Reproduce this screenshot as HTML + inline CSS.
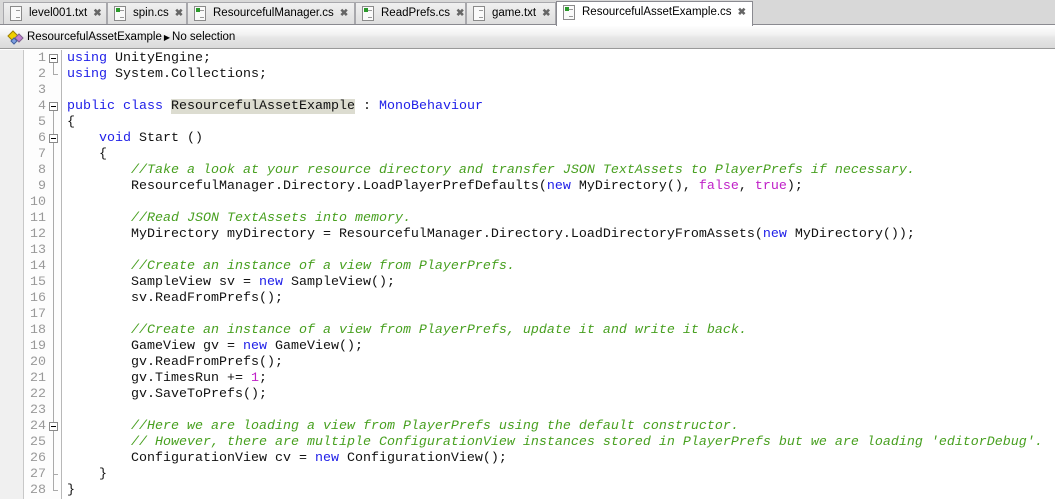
<!DOCTYPE html>
<html><head><meta charset="utf-8"><style>
*{margin:0;padding:0;box-sizing:border-box}
body{width:1055px;height:499px;overflow:hidden;background:#fff;position:relative;font-family:"Liberation Sans",Tahoma,sans-serif}
#tabs{position:absolute;left:0;top:0;width:1055px;height:25px;background:#d8d8d8;border-bottom:1px solid #8a8a90}
.tab{position:absolute;top:2px;height:22px;background:linear-gradient(#f0f0f0,#dedede);border:1px solid #a8a8ac;border-bottom:none;font-size:11.5px;color:#000;line-height:21px;padding-left:25px;white-space:nowrap;overflow:hidden}
.tab .x{margin-left:6px;color:#666;font-size:10px;font-weight:bold}
.tab.act{top:1px;height:25px;background:#fff;border-color:#8a8a90;z-index:2}
.ic{position:absolute;left:6px;top:3px;width:12px;height:15px;border:1px solid #8a8a8a;background:#fafafa}
.ic.cs::before{content:"";position:absolute;left:1px;top:1px;width:4px;height:4px;background:#2a9a2a}
.ic::after{content:"";position:absolute;left:5px;top:3px;width:4px;height:6px;border-top:1px solid #999;border-bottom:1px solid #999}
#crumb{position:absolute;left:0;top:25px;width:1055px;height:24px;background:linear-gradient(#fff 0,#f2f2f2 40%,#e6e6e6 55%,#dadada 100%);border-bottom:1px solid #999;font-size:11.5px;line-height:25px;padding-left:27px}
#lg{position:absolute;left:0;top:50px;width:24px;height:449px;background:#f0f0f0;border-right:1px solid #c8c8c8}
#ln{position:absolute;left:24px;top:50px;width:38px;height:449px;background:#fdfdfd;border-right:1px solid #b8b8b8}
.n{position:absolute;right:15px;width:30px;text-align:right;font:13.33px "Liberation Mono",monospace;color:#999;height:16px;line-height:16px}
.box{position:absolute;left:25px;width:9px;height:9px;border:1px solid #8a8a8a;background:#fff}
.box::after{content:"";position:absolute;left:1px;top:3px;width:5px;height:1px;background:#000}
.vl{position:absolute;left:29px;width:1px;background:#aaa}
.tk{position:absolute;left:29px;width:5px;height:1px;background:#aaa}
#code{position:absolute;left:67px;top:51px;font:13.33px "Liberation Mono","Courier New",monospace;line-height:16px;white-space:pre;color:#111}
.k{color:#2020e8}.c{color:#48a020;font-style:italic}.m{color:#c020c8}
.hl{background:#dcdcd0}
</style></head><body>
<div id="tabs">
<div class="tab" style="left:3px;width:104px"><span class="ic"></span>level001.txt<span class="x">✖</span></div>
<div class="tab" style="left:107px;width:80px"><span class="ic cs"></span>spin.cs<span class="x">✖</span></div>
<div class="tab" style="left:187px;width:168px"><span class="ic cs"></span>ResourcefulManager.cs<span class="x">✖</span></div>
<div class="tab" style="left:355px;width:111px"><span class="ic cs"></span>ReadPrefs.cs<span class="x">✖</span></div>
<div class="tab" style="left:466px;width:90px"><span class="ic"></span>game.txt<span class="x">✖</span></div>
<div class="tab act" style="left:556px;width:197px"><span class="ic cs"></span>ResourcefulAssetExample.cs<span class="x">✖</span></div>
</div>
<div id="crumb"><svg style="position:absolute;left:7px;top:5px" width="18" height="16"><path d="M1 6 L6 1 L11 6 L6 11Z" fill="#f0d000" stroke="#a08000"/><path d="M8 8 L12 4 L16 8 L12 12Z" fill="#c080d0" stroke="#806090"/><path d="M4 11 L7 8 L10 11 L7 14Z" fill="#80a0e0" stroke="#4060a0"/></svg>ResourcefulAssetExample<span style="font-size:8px;margin:0 2px">▶</span>No selection</div>
<div id="lg"></div>
<div id="ln">
<div class="n" style="top:1px">1</div><div class="n" style="top:17px">2</div><div class="n" style="top:33px">3</div><div class="n" style="top:49px">4</div><div class="n" style="top:65px">5</div><div class="n" style="top:81px">6</div><div class="n" style="top:97px">7</div><div class="n" style="top:113px">8</div><div class="n" style="top:129px">9</div><div class="n" style="top:145px">10</div><div class="n" style="top:161px">11</div><div class="n" style="top:177px">12</div><div class="n" style="top:193px">13</div><div class="n" style="top:209px">14</div><div class="n" style="top:225px">15</div><div class="n" style="top:241px">16</div><div class="n" style="top:257px">17</div><div class="n" style="top:273px">18</div><div class="n" style="top:289px">19</div><div class="n" style="top:305px">20</div><div class="n" style="top:321px">21</div><div class="n" style="top:337px">22</div><div class="n" style="top:353px">23</div><div class="n" style="top:369px">24</div><div class="n" style="top:385px">25</div><div class="n" style="top:401px">26</div><div class="n" style="top:417px">27</div><div class="n" style="top:433px">28</div>
<div class="vl" style="top:13px;height:12px"></div><div class="tk" style="top:24px"></div>
<div class="vl" style="top:61px;height:380px"></div>
<div class="tk" style="top:424px"></div><div class="tk" style="top:440px"></div>
<div class="box" style="top:4px"></div><div class="box" style="top:52px"></div><div class="box" style="top:84px"></div><div class="box" style="top:372px"></div>
</div>
<div id="code"><span class="k">using</span> UnityEngine;
<span class="k">using</span> System.Collections;

<span class="k">public</span> <span class="k">class</span> <span class="hl">ResourcefulAssetExample</span> : <span class="k">MonoBehaviour</span>
{
    <span class="k">void</span> Start ()
    {
        <span class="c">//Take a look at your resource directory and transfer JSON TextAssets to PlayerPrefs if necessary.</span>
        ResourcefulManager.Directory.LoadPlayerPrefDefaults(<span class="k">new</span> MyDirectory(), <span class="m">false</span>, <span class="m">true</span>);

        <span class="c">//Read JSON TextAssets into memory.</span>
        MyDirectory myDirectory = ResourcefulManager.Directory.LoadDirectoryFromAssets(<span class="k">new</span> MyDirectory());

        <span class="c">//Create an instance of a view from PlayerPrefs.</span>
        SampleView sv = <span class="k">new</span> SampleView();
        sv.ReadFromPrefs();

        <span class="c">//Create an instance of a view from PlayerPrefs, update it and write it back.</span>
        GameView gv = <span class="k">new</span> GameView();
        gv.ReadFromPrefs();
        gv.TimesRun += <span class="m">1</span>;
        gv.SaveToPrefs();

        <span class="c">//Here we are loading a view from PlayerPrefs using the default constructor.</span>
        <span class="c">// However, there are multiple ConfigurationView instances stored in PlayerPrefs but we are loading 'editorDebug'.</span>
        ConfigurationView cv = <span class="k">new</span> ConfigurationView();
    }
}</div>
</body></html>
